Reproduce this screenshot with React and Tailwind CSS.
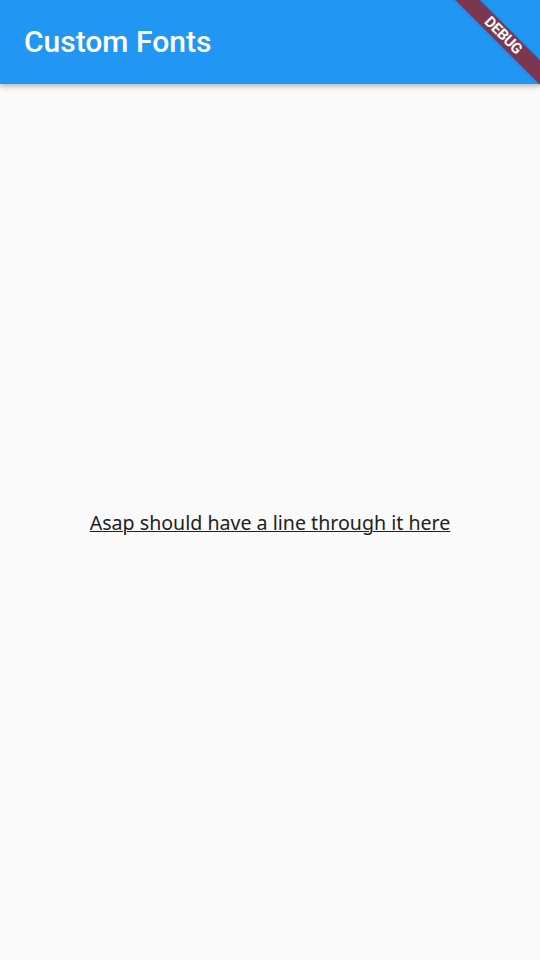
import React from 'react'

const App = () => {
    return (
        <div className="relative h-[960px] w-[540px] overflow-hidden bg-[#fafafa] flex flex-col">
            {/* App bar */}
            <header className="h-[84px] shrink-0 bg-[#2196f3] flex items-center px-6 shadow-[0_2px_6px_rgba(0,0,0,0.3)] z-10">
                <h1 className="text-white text-[30px] font-medium font-['Roboto',sans-serif] leading-none">Custom Fonts</h1>
            </header>

            {/* Body */}
            <main className="grow flex items-center justify-center pt-[2px]">
                <p className="text-[19.6px] text-[#212121] font-['Noto_Sans',sans-serif] underline decoration-[1.4px] underline-offset-[1px] leading-none">
                    Asap should have a line through it here
                </p>
            </main>

            {/* Debug banner */}
            <div className="absolute left-[423px] top-[27px] w-[160px] h-[17px] rotate-45 bg-[#7d3652] flex items-center justify-center z-20 shadow-[0_0_3px_rgba(0,0,0,0.25)]">
                <span className="text-white text-[15px] font-bold font-['Roboto',sans-serif] leading-none tracking-tight">DEBUG</span>
            </div>
        </div>
    )
}

export default App
